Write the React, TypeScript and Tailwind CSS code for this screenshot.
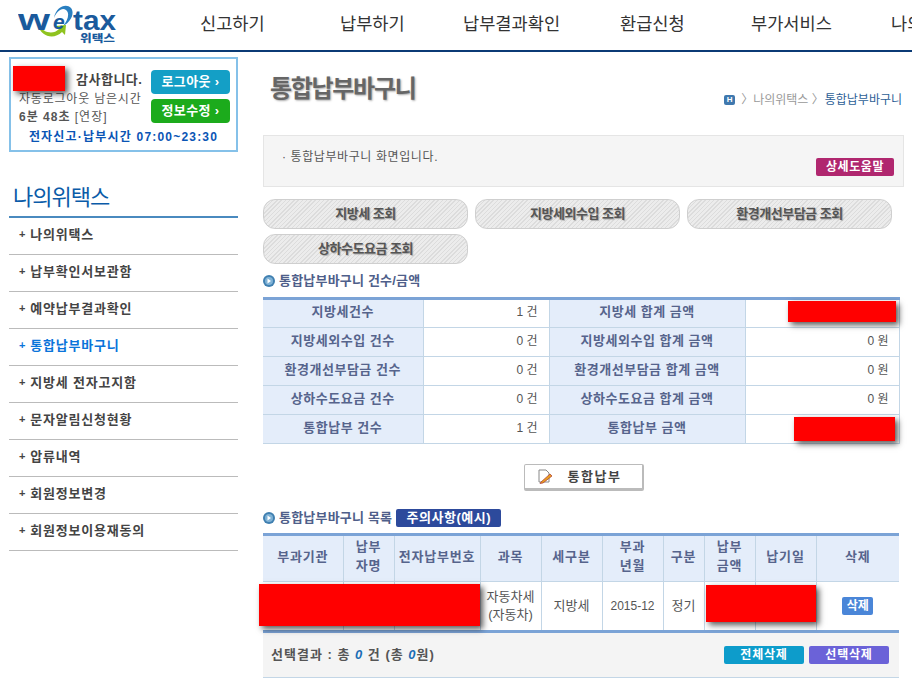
import React from "react";

const font = { fontFamily: '"Liberation Sans","Noto Sans CJK KR",sans-serif' };

function Logo() {
  return (
    <svg width="100" height="42" viewBox="0 0 100 42" className="ml-[18px] mt-[4px] shrink-0">
      <path d="M36 14 C38 3 48 -1 53 4 C57 9 53 18 45 22 C50 16 52 9 48 6 C44 3 39 7 36 14Z" fill="#2a7fc0" />
      <path d="M20 21 C23 33 36 36 44 28 L47 31 L48 21 L38 22 L41 25 C35 31 26 29 20 21Z" fill="#8fc31f" />
      <text x="0" y="26" fontFamily="Liberation Sans" fontWeight="700" fontSize="30" fill="#1a5a9c" textLength="32" lengthAdjust="spacingAndGlyphs">w</text>
      <text x="35" y="25" fontFamily="Liberation Sans" fontWeight="700" fontStyle="italic" fontSize="21" fill="#1a5a9c">e</text>
      <text x="55" y="26" fontFamily="Liberation Sans" fontWeight="700" fontSize="27" fill="#1a5a9c" textLength="43" lengthAdjust="spacingAndGlyphs">tax</text>
      <text x="62" y="38" fontFamily="Noto Sans CJK KR" fontWeight="900" fontSize="10.5" fill="#1a5a9c" textLength="35" lengthAdjust="spacingAndGlyphs">위택스</text>
    </svg>
  );
}

function Redact({ className }: { className: string }) {
  return <div className={"absolute bg-[#ff0000] shadow-[3px_3px_6px_rgba(0,0,0,0.65)] " + className} />;
}

function Dot() {
  return (
    <svg width="12" height="12" viewBox="0 0 12 12" className="shrink-0">
      <circle cx="6" cy="6" r="6" fill="#3f7fb0" />
      <circle cx="6" cy="6" r="4" fill="#7fb2d6" />
      <path d="M4.5 3.5 L8 6 L4.5 8.5Z" fill="#fff" />
    </svg>
  );
}

function ViewBtn({ children }: { children: React.ReactNode }) {
  return (
    <div className="flex h-[30px] w-[205px] items-center justify-center rounded-[12px] border border-[#cfcfcf] bg-[repeating-linear-gradient(135deg,#dcdcdc_0,#dcdcdc_1px,#ececec_1px,#ececec_3px)] text-[13px] font-bold tracking-[-0.5px] text-[#555] [text-shadow:1px_1px_1px_#aaa]">
      {children}
    </div>
  );
}

const sumRows = [
  ["지방세건수", "1 건", "지방세 합계 금액", ""],
  ["지방세외수입 건수", "0 건", "지방세외수입 합계 금액", "0 원"],
  ["환경개선부담금 건수", "0 건", "환경개선부담금 합계 금액", "0 원"],
  ["상하수도요금 건수", "0 건", "상하수도요금 합계 금액", "0 원"],
  ["통합납부 건수", "1 건", "통합납부 금액", ""],
];

const menu = ["나의위택스", "납부확인서보관함", "예약납부결과확인", "통합납부바구니", "지방세 전자고지함", "문자알림신청현황", "압류내역", "회원정보변경", "회원정보이용재동의"];

const heads: [string, number][] = [
  ["부과기관", 80], ["납부\n자명", 51], ["전자납부번호", 86], ["과목", 61], ["세구분", 61], ["부과\n년월", 61], ["구분", 41], ["납부\n금액", 51], ["납기일", 61], ["삭제", 83],
];

const th = "border-r border-[#c3d6e6] bg-[#e4edfa] pb-[5px] font-bold text-[#56648c] text-[13px] tracking-[0.8px] text-center last:border-r-0";
const lbl = "border-r border-[#c3d6e6] bg-[#e4edfa] pb-[3px] text-center text-[13px] font-bold tracking-[0.5px] text-[#56648c]";

export default function App() {
  return (
    <div style={font} className="relative h-[683px] w-[912px] overflow-hidden bg-white text-[12px] text-[#444]">
      <header className="flex h-[52px] border-b-2 border-[#0b3a75]">
        <Logo />
        <nav className="flex items-center pb-[2px] text-[17.6px] text-[#333]">
          <span className="ml-[82px] w-[140px]">신고하기</span>
          <span className="w-[123px]">납부하기</span>
          <span className="w-[157px]">납부결과확인</span>
          <span className="w-[131px]">환급신청</span>
          <span className="w-[140px] whitespace-nowrap">부가서비스</span>
          <span className="whitespace-nowrap">나의위택스</span>
        </nav>
      </header>

      <div className="flex">
        <aside className="ml-[9px] w-[229px] shrink-0 pt-[5px]">
          <div className="h-[95px] border-[2px] border-[#85c1e9] px-[8px]">
            <div className="flex h-[64px] justify-between pt-[11px]">
              <div className="pt-[1px] leading-[18.5px] text-[#555]">
                <div className="pl-[57px] text-[13px] font-bold tracking-[0.5px] text-[#444]">감사합니다.</div>
                <div className="whitespace-nowrap tracking-[0.8px]">자동로그아웃 남은시간</div>
                <div className="tracking-[1px]"><b>6분 48초</b> [연장]</div>
              </div>
              <div className="mr-[-2px] flex flex-col gap-[5px]">
                <div className="flex h-[24px] w-[79px] items-center justify-center rounded-[4px] bg-[#149fc6] text-[13px] font-bold tracking-[0.4px] text-white">로그아웃 ›</div>
                <div className="flex h-[24px] w-[79px] items-center justify-center rounded-[4px] bg-[#1cab1c] text-[13px] font-bold tracking-[0.4px] text-white">정보수정 ›</div>
              </div>
            </div>
            <div className="mt-[5px] whitespace-nowrap text-center font-bold tracking-[1.2px] text-[#0a55b5]">전자신고·납부시간 07:00~23:30</div>
          </div>

          <h2 className="mt-[28px] h-[38px] border-b-2 border-[#4a8abf] pl-[4px] text-[22px] leading-[35px] tracking-[-1px] text-[#0a5ba8]">나의위택스</h2>
          <ul>
            {menu.map((m) => (
              <li key={m} className={"flex h-[37px] items-center gap-[4px] border-b border-[#bbb] pb-[3px] pl-[10px] text-[13px] font-bold tracking-[0.8px] " + (m === "통합납부바구니" ? "text-[#0a74da]" : "text-[#444]")}>
                <span className="text-[11px]">+</span>
                {m}
              </li>
            ))}
          </ul>
        </aside>

        <main className="ml-[25px] w-[641px] shrink-0">
          <div className="flex h-[83px] justify-between">
            <h1 className="ml-[7px] mt-[19px] text-[24px] font-bold tracking-[-1.3px] text-[#666] [text-shadow:1px_1px_2px_#aaa]">통합납부바구니</h1>
            <div className="mr-[2px] mt-[39px] flex items-center gap-[6px] self-start text-[12px] text-[#999]">
              <span className="flex h-[10px] w-[11px] items-center justify-center rounded-[2px] bg-[#3f78ae] text-[8px] font-bold text-white">H</span>
              <span className="text-[#999]">〉나의위택스 〉</span>
              <span className="ml-[-5px] text-[#2d6096]">통합납부바구니</span>
            </div>
          </div>

          <div className="flex h-[52px] justify-between border border-[#e5e5e5] bg-[#f5f5f5]">
            <div className="ml-[18px] mt-[12px] tracking-[0.6px] text-[#555]">· 통합납부바구니 화면입니다.</div>
            <div className="mr-[9px] mt-[22px] flex h-[18px] w-[78px] items-center justify-center rounded-[2px] bg-[#b0276f] font-bold tracking-[0.6px] text-white">상세도움말</div>
          </div>

          <div className="mt-[12px] flex flex-wrap gap-x-[7px] gap-y-[5px]">
            <ViewBtn>지방세 조회</ViewBtn>
            <ViewBtn>지방세외수입 조회</ViewBtn>
            <ViewBtn>환경개선부담금 조회</ViewBtn>
            <ViewBtn>상하수도요금 조회</ViewBtn>
          </div>

          <div className="mt-[8px] flex h-[18px] items-center gap-[4px] text-[13px] font-bold tracking-[0.2px] text-[#4f5f8a]">
            <Dot />통합납부바구니 건수/금액
          </div>

          <table className="mt-[7px] w-[636px] table-fixed border-collapse border-t-[3px] border-[#7ba3d6] text-[12px]">
            <colgroup>
              <col className="w-[160px]" /><col className="w-[126px]" /><col className="w-[196px]" /><col className="w-[154px]" />
            </colgroup>
            <tbody>
              {sumRows.map((r) => (
                <tr key={r[0]} className="h-[29px] border-b border-[#c3d6e6]">
                  <td className={lbl}>{r[0]}</td>
                  <td className="border-r border-[#c3d6e6] pb-[3px] pr-[11px] text-right text-[#555]">{r[1]}</td>
                  <td className={lbl}>{r[2]}</td>
                  <td className="border-r border-[#c3d6e6] pb-[3px] pr-[10px] text-right text-[#555]">{r[3]}</td>
                </tr>
              ))}
            </tbody>
          </table>

          <div className="mt-[20px] flex justify-center">
            <div className="flex h-[27px] w-[120px] items-center gap-[15px] rounded-[2px] border border-[#bbb] border-b-[3px] border-r-2 pl-[13px] text-[13px] font-bold tracking-[1.5px] text-[#444]">
              <svg width="15" height="15" viewBox="0 0 15 15">
                <path d="M1 1 H8 L11 4 V13 H1Z" fill="#fff" stroke="#888" />
                <path d="M3 13 L12 5 L14 7 L5 14 L2 14.5Z" fill="#e8a020" stroke="#a33" strokeWidth="0.7" />
              </svg>
              통합납부
            </div>
          </div>

          <div className="mt-[18px] flex h-[18px] items-center gap-[4px] text-[13px] font-bold tracking-[0.2px] text-[#4f5f8a]">
            <Dot />통합납부바구니 목록
            <span className="flex h-[18px] w-[105px] items-center justify-center rounded-[2px] bg-[#2d4a9c] tracking-[0.5px] text-white">주의사항(예시)</span>
          </div>

          <table className="mt-[6px] w-[636px] table-fixed border-collapse border-t-[3px] border-[#7ba3d6] text-[13px]">
            <colgroup>
              {heads.map(([h, w]) => <col key={h} style={{ width: w }} />)}
            </colgroup>
            <thead>
              <tr className="h-[47px] border-b border-[#c3d6e6]">
                {heads.map(([h]) => (
                  <th key={h} className={th + " whitespace-pre-line leading-[19px]"}>{h}</th>
                ))}
              </tr>
            </thead>
            <tbody>
              <tr className="h-[50px] border-b-[3px] border-[#7ba3d6] text-center text-[#555]">
                <td className="border-r border-[#c3d6e6]" />
                <td className="border-r border-[#c3d6e6]" />
                <td className="border-r border-[#c3d6e6]" />
                <td className="border-r border-[#c3d6e6] leading-[18px]">자동차세<br />(자동차)</td>
                <td className="border-r border-[#c3d6e6]">지방세</td>
                <td className="border-r border-[#c3d6e6] text-[12px]">2015-12</td>
                <td className="border-r border-[#c3d6e6]">정기</td>
                <td className="border-r border-[#c3d6e6]" />
                <td className="border-r border-[#c3d6e6]" />
                <td>
                  <span className="inline-flex h-[18px] w-[31px] items-center justify-center rounded-[2px] bg-[#4a86d8] text-[12px] font-bold text-white">삭제</span>
                </td>
              </tr>
            </tbody>
          </table>

          <div className="flex h-[45px] w-[636px] items-center justify-between border-b border-[#c3d6e6] bg-[#f4f4f4] pl-[8px] pr-[10px]">
            <div className="text-[13px] font-bold tracking-[1px] text-[#555]">
              선택결과 : 총 <i className="text-[#1a6db5]">0</i> 건 (총 <i className="text-[#1a6db5]">0</i>원)
            </div>
            <div className="flex gap-[5px]">
              <span className="flex h-[18px] w-[80px] items-center justify-center rounded-[2px] bg-[#0d9ccb] font-bold tracking-[0.8px] text-white">전체삭제</span>
              <span className="flex h-[18px] w-[80px] items-center justify-center rounded-[2px] bg-[#6b62d8] font-bold tracking-[0.8px] text-white">선택삭제</span>
            </div>
          </div>
        </main>
      </div>

      <Redact className="left-[13px] top-[66px] h-[25px] w-[52px]" />
      <Redact className="left-[788px] top-[301px] h-[21px] w-[108px]" />
      <Redact className="left-[794px] top-[417px] h-[24px] w-[101px]" />
      <Redact className="left-[259px] top-[584px] h-[42px] w-[221px]" />
      <Redact className="left-[706px] top-[585px] h-[37px] w-[110px]" />
    </div>
  );
}
